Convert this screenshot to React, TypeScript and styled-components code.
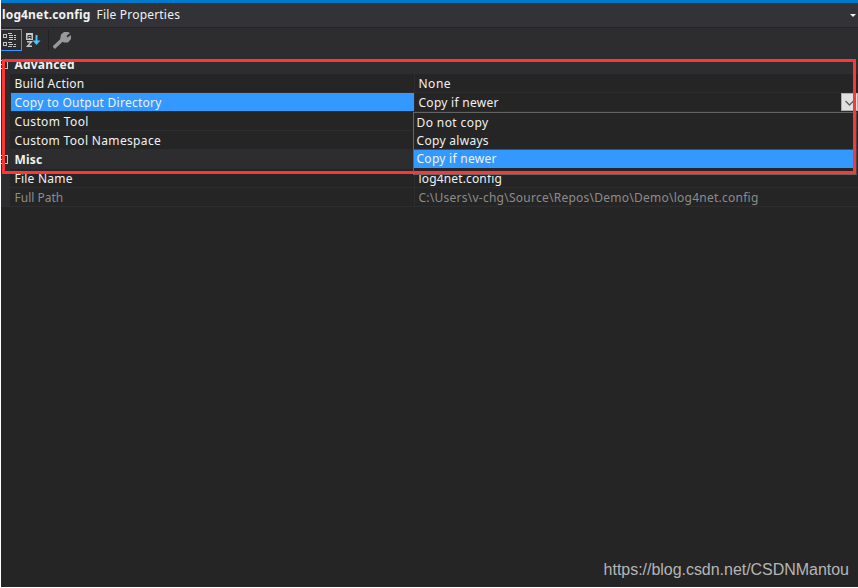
import React from 'react';
import styled, { createGlobalStyle } from 'styled-components';

const Global = createGlobalStyle`
  * { box-sizing: border-box; }
  html, body { margin: 0; padding: 0; overflow: hidden; background: #fff; }
`;

const Panel = styled.main`
  position: relative;
  display: flex;
  flex-direction: column;
  width: 857px;
  height: 587px;
  margin-left: 1px;
  overflow: hidden;
  background: #252526;
  border-top: 3px solid #007acc;
  color: #f1f1f1;
  font: 12px/18px 'Noto Sans', 'Open Sans', sans-serif;
  white-space: nowrap;
`;

const Text = styled.span<{ $spacing?: number }>`
  letter-spacing: ${(p) => p.$spacing ?? 0}px;
`;

const TitleBar = styled.header`
  display: flex;
  align-items: center;
  flex: 0 0 24px;
  gap: 6px;
  padding: 0 2px 0 1px;
  background: #333337;
`;

const ObjectName = styled.strong`
  font-weight: 700;
  letter-spacing: 0.15px;
`;

const TitleArrow = styled.svg`
  margin-left: auto;
`;

const Toolbar = styled.div`
  display: flex;
  align-items: flex-start;
  flex: 0 0 28px;
  padding-top: 1px;
  background: #2d2d30;
  border-top: 1px solid #252526;
`;

const ToolButton = styled.button<{ $active?: boolean; $width: number }>`
  display: block;
  width: ${(p) => p.$width}px;
  height: 22px;
  padding: 0;
  border: 1px solid ${(p) => (p.$active ? '#3399ff' : 'transparent')};
  border-left: 0;
  background: transparent;
`;

const Separator = styled.i`
  width: 1px;
  height: 20px;
  margin: 1px 4px 0;
  background: #222225;
`;

const Grid = styled.section`
  display: flex;
  flex-direction: column;
`;

const GroupRow = styled.div`
  display: grid;
  grid-template-columns: 13.5px 1fr;
  height: 19px;
  background: #2d2d30;
  font-weight: 700;
  line-height: 20px;
`;

const Expander = styled.svg`
  margin-top: 5px;
`;

const Row = styled.div<{ $muted?: boolean }>`
  display: grid;
  grid-template-columns: 9px 404px 1fr;
  height: 19px;
  background: #2d2d30;
  color: ${(p) => (p.$muted ? '#8c8c8c' : '#f1f1f1')};
  line-height: 20px;
`;

const Name = styled.div<{ $selected?: boolean }>`
  grid-column: 2;
  height: 18px;
  padding-left: ${(p) => (p.$selected ? 3.5 : 4.5)}px;
  margin-left: ${(p) => (p.$selected ? 1 : 0)}px;
  background: ${(p) => (p.$selected ? '#3399ff' : '#252526')};
`;

const Value = styled.div`
  display: flex;
  justify-content: space-between;
  height: 18px;
  margin-left: 1px;
  padding-left: 3.5px;
  background: #252526;
`;

const DropButton = styled.button`
  width: 17px;
  height: 18px;
  padding: 0;
  border: 1px solid #acacac;
  background: #e1e1e1;
`;

const Options = styled.div`
  position: absolute;
  left: 412px;
  top: 109px;
  width: 444px;
  height: 63px;
  padding-top: 1px;
  border: 1px solid #646464;
  border-right-color: #444;
  background: #252526;
`;

const Option = styled.div<{ $selected?: boolean }>`
  height: 18px;
  padding-left: 2.5px;
  background: ${(p) => (p.$selected ? '#3399ff' : 'transparent')};
  box-shadow: ${(p) => (p.$selected ? '0 -1px #69482f' : 'none')};
`;

const Highlight = styled.div`
  position: absolute;
  left: 1px;
  top: 56px;
  width: 854px;
  height: 115px;
  border: 3px solid #ff3638;
`;

const Watermark = styled.div`
  position: absolute;
  right: 9px;
  bottom: 7px;
  color: #b5b5b5;
  font: 16px/20px 'Liberation Sans', Arial, sans-serif;
  letter-spacing: -0.03px;
`;

type Item = { name: string; value?: string; ns?: number; vs?: number; selected?: boolean; muted?: boolean };

const advanced: Item[] = [
  { name: 'Build Action', value: 'None', ns: 0.2, vs: 0.5 },
  { name: 'Copy to Output Directory', value: 'Copy if newer', selected: true, ns: 0.25, vs: 0.27 },
  { name: 'Custom Tool', ns: 0.38 },
  { name: 'Custom Tool Namespace', ns: 0.34 },
];

const misc: Item[] = [
  { name: 'File Name', value: 'log4net.config', ns: 0.22, vs: 0.15 },
  { name: 'Full Path', value: 'C:\\Users\\v-chg\\Source\\Repos\\Demo\\Demo\\log4net.config', muted: true, vs: 0.25 },
];

const Group = ({ title, items }: { title: string; items: Item[] }) => (
  <>
    <GroupRow>
      <Expander width="7" height="9" viewBox="0 0 7 9" shapeRendering="crispEdges">
        <path d="M0 .5h6.5v8H0M0 4.5h4" fill="none" stroke="#c8c8c8" />
      </Expander>
      <Text $spacing={0.2}>{title}</Text>
    </GroupRow>
    {items.map((item) => (
      <Row key={item.name} $muted={item.muted}>
        <Name $selected={item.selected}><Text $spacing={item.ns}>{item.name}</Text></Name>
        <Value>
          <Text $spacing={item.vs}>{item.value}</Text>
          {item.selected && (
            <DropButton aria-label="Open list">
              <svg width="15" height="16" viewBox="0 0 15 16" display="block">
                <path d="M3.5 7l4 4 4-4" fill="none" stroke="#606060" strokeWidth="1.3" />
              </svg>
            </DropButton>
          )}
        </Value>
      </Row>
    ))}
  </>
);

export default function App() {
  return (
    <>
      <Global />
      <Panel>
        <TitleBar>
          <ObjectName>log4net.config</ObjectName>
          <Text $spacing={0.2}>File Properties</Text>
          <TitleArrow width="6" height="3" viewBox="0 0 6 3"><path d="M0 0h6L3 3z" fill="#f1f1f1" /></TitleArrow>
        </TitleBar>
        <Toolbar>
          <ToolButton $active $width={21} aria-label="Categorized">
            <svg width="20" height="20" viewBox="0 0 20 20" display="block" shapeRendering="crispEdges">
              <path d="M2.5 4.500h3v3h-3zM2.500 12.500h3v3h-3z" fill="none" stroke="#c8c8c8" />
              <path d="M7 3.500h5M8 5.500h7M8 7.500h7M8 9.500h7M7 12.500h5M8 14.500h7M7 16.500h8" stroke="#c8c8c8" strokeDasharray="4 1" />
            </svg>
          </ToolButton>
          <ToolButton $width={22} aria-label="Alphabetical">
            <svg width="21" height="20" viewBox="0 0 21 20" display="block">
              <path d="M4 3h7v7H4z" fill="#c8c8c8" />
              <path d="M6 9V5.500h3V9M6 7.500h3" fill="none" stroke="#2d2d30" />
              <path d="M5 11.700h4.500l-4 4.500H10" fill="none" stroke="#c8c8c8" strokeWidth="1.400" />
              <path d="M13.500 5h2v5.500h3l-4 4.500-4-4.500h3z" fill="#55bef5" />
            </svg>
          </ToolButton>
          <Separator />
          <ToolButton $width={20} aria-label="Property pages">
            <svg width="19" height="20" viewBox="0 0 19 20" display="block">
              <path d="M2 16.500L10 9" stroke="#999" strokeWidth="3.600" strokeLinecap="square" />
              <path d="M8 4.500L11 2h4l2 1-3.500 3 1 1.500L18 5v4l-3 3.500h-4L7 10z" fill="#999" />
            </svg>
          </ToolButton>
        </Toolbar>
        <Grid>
          <Group title="Advanced" items={advanced} />
          <Group title="Misc" items={misc} />
        </Grid>
        <Options>
          <Option><Text $spacing={0.4}>Do not copy</Text></Option>
          <Option><Text $spacing={0.3}>Copy always</Text></Option>
          <Option $selected><Text $spacing={0.27}>Copy if newer</Text></Option>
        </Options>
        <Highlight />
        <Watermark>https://blog.csdn.net/CSDNMantou</Watermark>
      </Panel>
    </>
  );
}
